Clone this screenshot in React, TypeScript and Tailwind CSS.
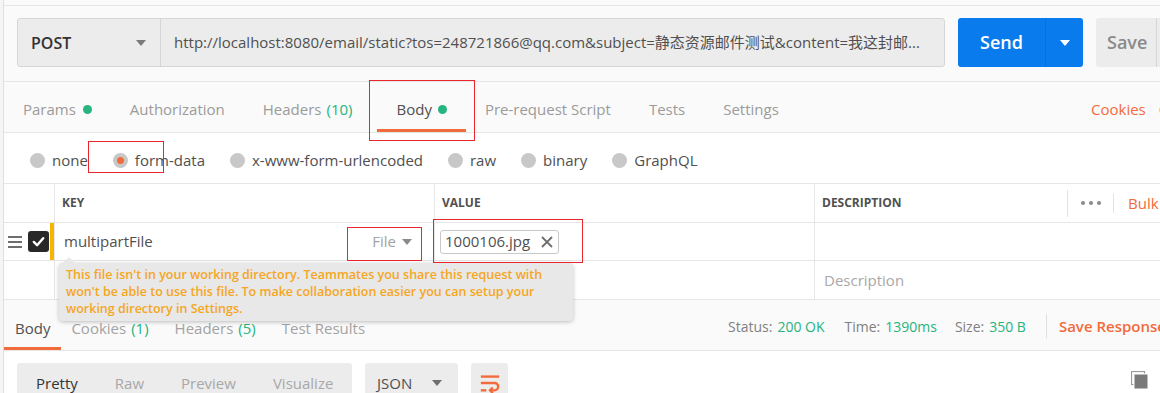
import React from "react";

const ORANGE = "text-[#f26b3a]";

function Caret({ className = "" }: { className?: string }) {
  return (
    <svg width="10" height="6" viewBox="0 0 10 6" className={className}>
      <path d="M0 0 L10 0 L5 6 Z" fill="currentColor" />
    </svg>
  );
}

function Radio({ selected = false }: { selected?: boolean }) {
  return (
    <span className="w-[15px] h-[15px] rounded-full bg-[#c8c8c8] flex items-center justify-center shrink-0">
      {selected && <span className="w-[7px] h-[7px] rounded-full bg-[#f26b3a]" />}
    </span>
  );
}

function RedBox({ cls }: { cls: string }) {
  return <div className={`absolute border border-[#e8262b] pointer-events-none ${cls}`} />;
}

export default function App() {
  return (
    <div className="w-[1160px] h-[393px] overflow-hidden relative flex bg-[#f5f5f5] font-['Open_Sans','Noto_Sans_CJK_SC',sans-serif] text-[#505050]">
      <div className="w-[3px] shrink-0" />
      <div className="flex-1 min-w-0 border-l border-[#e0e0e0] flex flex-col">
        {/* top strip */}
        <div className="h-[6px] shrink-0 border-b border-[#e6e6e6] bg-[#fafafa]" />
        {/* request bar */}
        <div className="h-[76px] shrink-0 border-b border-[#e6e6e6] bg-[#fafafa] pt-[12px] pl-[13px] flex items-start">
          <div className="h-[49px] w-[928px] shrink-0 flex rounded-[3px] border border-[#d6d6d6] bg-[#ececec]">
            <div className="w-[143px] shrink-0 border-r border-[#d6d6d6] flex items-center pl-[13px] pr-[14px]">
              <span className="text-[16px] font-semibold text-[#333] flex-1">POST</span>
              <Caret className="text-[#7a7a7a]" />
            </div>
            <div className="flex-1 min-w-0 flex items-center pl-[13px] text-[15px] text-[#505050] whitespace-nowrap overflow-hidden">
              http://localhost:8080/email/static?tos=248721866@qq.com&amp;subject=静态资源邮件测试&amp;content=我这封邮...
            </div>
          </div>
          <div className="ml-[13px] h-[49px] w-[125px] shrink-0 flex rounded-[3px] bg-[#097bed] text-white">
            <div className="w-[88px] border-r border-[#0a6fd6] flex items-center justify-center text-[18px] font-semibold">
              Send
            </div>
            <div className="flex-1 flex items-center justify-center">
              <Caret className="text-white" />
            </div>
          </div>
          <div className="ml-[13px] h-[49px] w-[80px] shrink-0 flex rounded-[3px] bg-[#ececec]">
            <div className="w-[61px] border-r border-[#d6d6d6] flex items-center pl-[11px] text-[18px] font-semibold text-[#8a8a8a]">
              Save
            </div>
          </div>
        </div>
        {/* request tabs */}
        <div className="h-[51px] shrink-0 border-b border-[#e6e6e6] bg-[#fafafa] flex text-[15px]">
          <div className="flex-1 flex">
            <div className="px-[19px] pt-[7px] flex items-center gap-[7px] border-b-[3px] border-transparent text-[#9b9b9b]">
              Params <span className="w-[9px] h-[9px] rounded-full bg-[#26b47f]" />
            </div>
            <div className="px-[19px] pt-[7px] flex items-center border-b-[3px] border-transparent text-[#9b9b9b]">Authorization</div>
            <div className="pl-[19px] pr-[25px] pt-[7px] flex items-center gap-[5px] border-b-[3px] border-transparent text-[#9b9b9b]">
              Headers <span className="text-[#26b47f]">(10)</span>
            </div>
            <div className="px-[19px] pt-[7px] flex items-center gap-[6px] border-b-[3px] border-[#f26b3a] text-[#505050]">
              Body <span className="w-[9px] h-[9px] rounded-full bg-[#26b47f]" />
            </div>
            <div className="px-[19px] pt-[7px] flex items-center border-b-[3px] border-transparent text-[#9b9b9b]">Pre-request Script</div>
            <div className="px-[19px] pt-[7px] flex items-center border-b-[3px] border-transparent text-[#9b9b9b]">Tests</div>
            <div className="px-[19px] pt-[7px] flex items-center border-b-[3px] border-transparent text-[#9b9b9b]">Settings</div>
          </div>
          <div className={`w-[69px] shrink-0 flex items-center gap-[13px] whitespace-nowrap overflow-hidden pt-[7px] pb-[3px] ${ORANGE}`}>
            <span>Cookies</span>
            <span>Code</span>
          </div>
        </div>
        {/* body type radios */}
        <div className="h-[51px] shrink-0 border-b border-[#e6e6e6] bg-white pt-[5px] pl-[26px] flex items-center text-[15px] text-[#505050]">
          {[
            ["none", false],
            ["form-data", true],
            ["x-www-form-urlencoded", false],
            ["raw", false],
            ["binary", false],
            ["GraphQL", false],
          ].map(([label, sel], i) => (
            <div key={i} className={`flex items-center gap-[7px] ${i > 0 ? "ml-[25px]" : ""}`}>
              <Radio selected={sel as boolean} />
              <span>{label as string}</span>
            </div>
          ))}
        </div>
        {/* table header */}
        <div className="h-[39px] shrink-0 border-b border-[#e6e6e6] bg-white flex text-[12px] font-bold text-[#505050]">
          <div className="w-[51px] shrink-0 border-r border-[#e6e6e6]" />
          <div className="w-[380px] shrink-0 border-r border-[#e6e6e6] flex items-center pl-[7px]">KEY</div>
          <div className="w-[380px] shrink-0 border-r border-[#e6e6e6] flex items-center pl-[7px]">VALUE</div>
          <div className="flex-1 min-w-0 flex items-center">
            <div className="w-[252px] shrink-0 pl-[7px]">DESCRIPTION</div>
            <div className="w-px h-[27px] bg-[#e2e2e2] shrink-0" />
            <div className="w-[45px] shrink-0 flex items-center justify-center gap-[4px]">
              <span className="w-[4px] h-[4px] rounded-full bg-[#8a8a8a]" />
              <span className="w-[4px] h-[4px] rounded-full bg-[#8a8a8a]" />
              <span className="w-[4px] h-[4px] rounded-full bg-[#8a8a8a]" />
            </div>
            <div className="w-px h-[19px] bg-[#e2e2e2] shrink-0" />
            <div className={`pl-[14px] text-[15px] font-normal whitespace-nowrap ${ORANGE}`}>Bulk Edit</div>
          </div>
        </div>
        {/* row 1 */}
        <div className="h-[38px] shrink-0 border-b border-[#e6e6e6] bg-white flex text-[15px]">
          <div className="w-[51px] shrink-0 border-r border-[#e6e6e6] flex items-center">
            <div className="w-[14px] ml-[4px] flex flex-col gap-[3px]">
              <span className="h-[2px] bg-[#6e6e6e]" />
              <span className="h-[2px] bg-[#6e6e6e]" />
              <span className="h-[2px] bg-[#6e6e6e]" />
            </div>
            <div className="ml-[6px] w-[21px] h-[21px] rounded-[3px] bg-[#282828] flex items-center justify-center">
              <svg width="15" height="15" viewBox="0 0 16 16">
                <path d="M3 8.5 L6.5 12 L13 4.5" stroke="white" strokeWidth="2.6" fill="none" strokeLinecap="round" strokeLinejoin="round" />
              </svg>
            </div>
            <div className="ml-auto w-[4px] h-full bg-[#f5b400]" />
          </div>
          <div className="w-[380px] shrink-0 border-r border-[#e6e6e6] flex items-center pl-[9px]">
            <span className="flex-1">multipartFile</span>
            <span className="text-[#a3a3a3]">File</span>
            <Caret className="text-[#8a8a8a] ml-[6px] mr-[22px]" />
          </div>
          <div className="w-[380px] shrink-0 border-r border-[#e6e6e6] flex items-center pl-[5px]">
            <div className="h-[24px] w-[119px] border border-[#c8c8c8] rounded-[3px] flex items-center pl-[4px]">
              <span>1000106.jpg</span>
              <svg width="12" height="12" viewBox="0 0 12 12" className="ml-[11px]">
                <path d="M1 1 L11 11 M11 1 L1 11" stroke="#6e6e6e" strokeWidth="1.8" />
              </svg>
            </div>
          </div>
          <div className="flex-1" />
        </div>
        {/* row 2 */}
        <div className="h-[39px] shrink-0 border-b border-[#e6e6e6] bg-white flex text-[15px]">
          <div className="w-[51px] shrink-0 border-r border-[#e6e6e6]" />
          <div className="w-[380px] shrink-0 border-r border-[#e6e6e6]" />
          <div className="w-[380px] shrink-0 border-r border-[#e6e6e6]" />
          <div className="flex-1 flex items-center pl-[9px] text-[#a8a8a8]">Description</div>
        </div>
        {/* response tabs */}
        <div className="h-[51px] shrink-0 border-b border-[#e6e6e6] bg-[#fafafa] flex text-[15px] whitespace-nowrap">
          <div className="w-[724px] shrink-0 flex">
            <div className="px-[11px] pt-[10px] flex items-center border-b-[3px] border-[#f26b3a] text-[#505050]">Body</div>
            <div className="pl-[10px] pr-[13px] pt-[10px] flex items-center gap-[5px] border-b-[3px] border-transparent text-[#a3a3a3]">
              Cookies <span className="text-[#26b47f]">(1)</span>
            </div>
            <div className="px-[13px] pt-[10px] flex items-center gap-[5px] border-b-[3px] border-transparent text-[#a3a3a3]">
              Headers <span className="text-[#26b47f]">(5)</span>
            </div>
            <div className="px-[13px] pt-[10px] flex items-center border-b-[3px] border-transparent text-[#a3a3a3]">Test Results</div>
          </div>
          <div className="flex items-center text-[14px] pt-[2px]">
            <span className="text-[#808080]">Status:</span>
            <span className="ml-[5px] text-[#26b47f]">200 OK</span>
            <span className="ml-[20px] text-[#808080]">Time:</span>
            <span className="ml-[5px] text-[#26b47f]">1390ms</span>
            <span className="ml-[18px] text-[#808080]">Size:</span>
            <span className="ml-[5px] text-[#26b47f]">350 B</span>
            <span className="ml-[20px] w-px h-[24px] bg-[#e0e0e0]" />
            <span className={`ml-[12px] text-[15px] font-semibold ${ORANGE}`}>Save Response</span>
          </div>
        </div>
        {/* response body */}
        <div className="flex-1 bg-white pt-[12px] pl-[13px] flex items-start relative">
          <div className="h-[44px] w-[335px] shrink-0 rounded-[3px] bg-[#ececec] flex items-center pl-[19px] gap-[37px] text-[15px] text-[#a8a8a8] pb-[4px]">
            <span className="text-[#333]">Pretty</span>
            <span>Raw</span>
            <span>Preview</span>
            <span>Visualize</span>
          </div>
          <div className="ml-[13px] h-[44px] w-[93px] shrink-0 rounded-[3px] bg-[#ececec] flex items-center pl-[12px] pr-[16px] text-[15px] text-[#505050] pb-[4px]">
            <span className="flex-1">JSON</span>
            <Caret className="text-[#6e6e6e]" />
          </div>
          <div className="ml-[13px] h-[44px] w-[37px] shrink-0 rounded-[3px] bg-[#ececec] flex justify-center pt-[9px]">
            <svg width="22" height="22" viewBox="0 0 24 24" fill="none" stroke="#f26b3a" strokeWidth="2.6">
              <path d="M2 5 H22" />
              <path d="M2 12 H17 a4 4 0 0 1 0 8 H12" />
              <path d="M15 17 L12 20 L15 23" />
              <path d="M2 20 H8" />
            </svg>
          </div>
          <svg width="19" height="19" viewBox="0 0 19 19" className="absolute left-[1127px] top-[20px]">
            <rect x="0.5" y="0.5" width="13" height="13" fill="none" stroke="#9a9a9a" strokeWidth="1.2" />
            <rect x="3" y="3" width="14" height="15" fill="#7a7a7a" stroke="#ffffff" strokeWidth="1" />
          </svg>
        </div>
      </div>

      {/* tooltip */}
      <div className="absolute left-[59px] top-[263px] w-[514px] h-[58px] bg-[#e8e8e8] rounded-[4px] shadow-[0_1px_4px_rgba(0,0,0,0.25)] px-[7px] pt-[3px] text-[12.5px] leading-[17px] font-semibold text-[#f5a623] whitespace-nowrap">
        <div className="absolute -top-[6px] left-[4px] w-0 h-0 border-l-[6px] border-r-[6px] border-b-[6px] border-l-transparent border-r-transparent border-b-[#e8e8e8]" />
        <div>This file isn't in your working directory. Teammates you share this request with</div>
        <div>won't be able to use this file. To make collaboration easier you can setup your</div>
        <div>working directory in Settings.</div>
      </div>

      {/* red annotation boxes */}
      <RedBox cls="left-[369px] top-[80px] w-[106px] h-[61px]" />
      <RedBox cls="left-[88px] top-[141px] w-[76px] h-[32px]" />
      <RedBox cls="left-[347px] top-[227px] w-[75px] h-[34px]" />
      <RedBox cls="left-[433px] top-[219px] w-[150px] h-[44px]" />
    </div>
  );
}
